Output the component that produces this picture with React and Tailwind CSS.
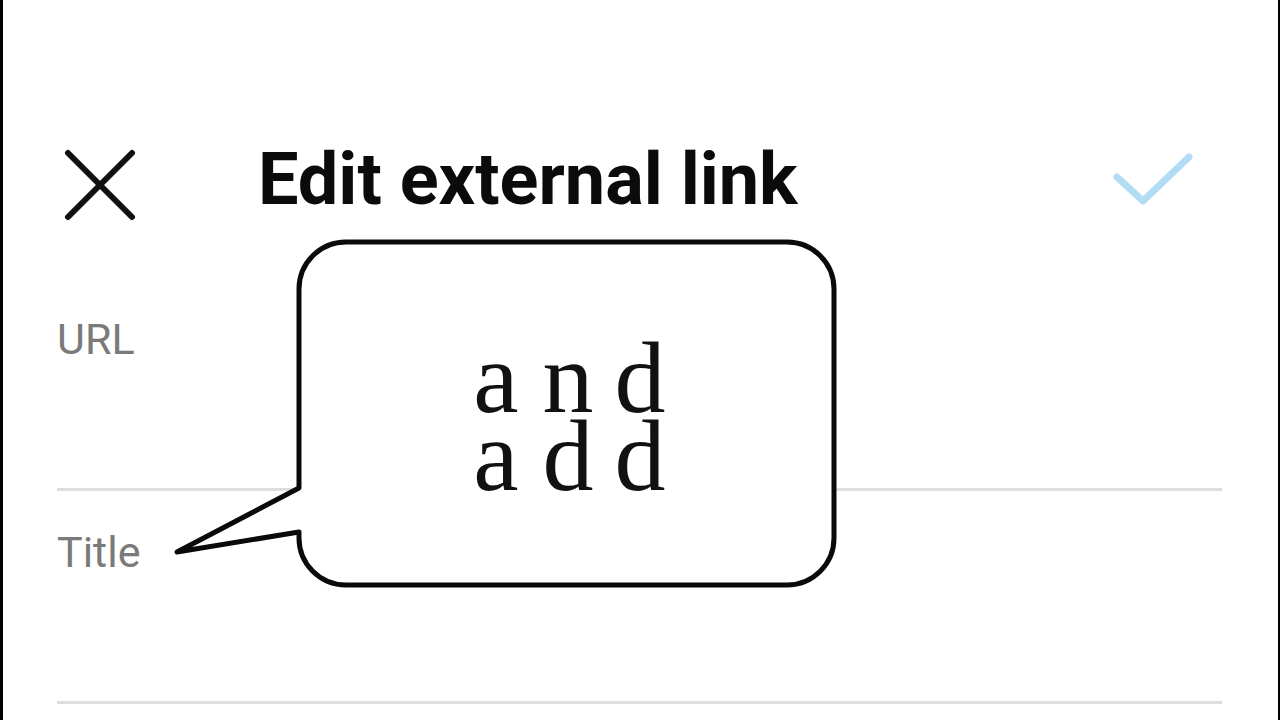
function CloseIcon() {
  return (
    <svg width="72" height="72" viewBox="0 0 72 72" fill="none">
      <path d="M4 4 L68 68 M68 4 L4 68" stroke="#111" strokeWidth="6" strokeLinecap="round" />
    </svg>
  )
}

function CheckIcon() {
  return (
    <svg width="80" height="56" viewBox="0 0 80 56" fill="none">
      <path d="M4 25 L30 49 L76 5" stroke="#b2dbf4" strokeWidth="7" strokeLinecap="round" strokeLinejoin="round" />
    </svg>
  )
}

function Field({ label, gap }) {
  return (
    <div className="flex flex-col">
      <div className={`${gap} font-['Roboto'] text-[43px] leading-none text-[#7a7a7a]`}>{label}</div>
      <div className="mt-[127px] h-[3px] bg-[#dedede]" />
    </div>
  )
}

function SpeechBubble() {
  const lines = ['and', 'add']

  return (
    <>
      <svg className="absolute left-0 top-0" width="1280" height="720" viewBox="0 0 1280 720" fill="none">
        <path
          d="M346 242 H787 A47 47 0 0 1 834 289 V538 A47 47 0 0 1 787 585 H346 A47 47 0 0 1 299 538 V532 L177 552 L299 488 V289 A47 47 0 0 1 346 242 Z"
          fill="white"
          stroke="#0a0a0a"
          strokeWidth="5"
          strokeLinejoin="round"
        />
      </svg>
      <div className="absolute left-[460px] top-[339px] w-[216px] font-['Liberation_Serif',serif] text-[102px] leading-[78px] text-[#111]">
        {lines.map((line) => (
          <div key={line} className="flex">
            {line.split('').map((character, index) => (
              <span key={`${line}-${index}`} className="inline-block w-[72px] text-center">
                {character}
              </span>
            ))}
          </div>
        ))}
      </div>
    </>
  )
}

export default function App() {
  return (
    <div className="relative h-[720px] w-[1280px] overflow-hidden bg-white">
      <div className="flex h-full flex-col border-l-[3px] border-r-2 border-black">
        <div className="mt-[138px] flex h-[84px] items-center">
          <div className="ml-[61px] mt-[10px] flex w-[72px] items-center">
            <CloseIcon />
          </div>
          <h1 className="ml-[122px] font-['Roboto'] text-[72px] font-bold leading-none text-[#0b0b0b]">
            Edit external link
          </h1>
          <div className="ml-auto mr-[85px] flex">
            <CheckIcon />
          </div>
        </div>

        <div className="flex flex-col pl-[54px] pr-[56px]">
          <Field label="URL" gap="mt-[96px]" />
          <Field label="Title" gap="mt-[40px]" />
        </div>
      </div>

      <SpeechBubble />
    </div>
  )
}
